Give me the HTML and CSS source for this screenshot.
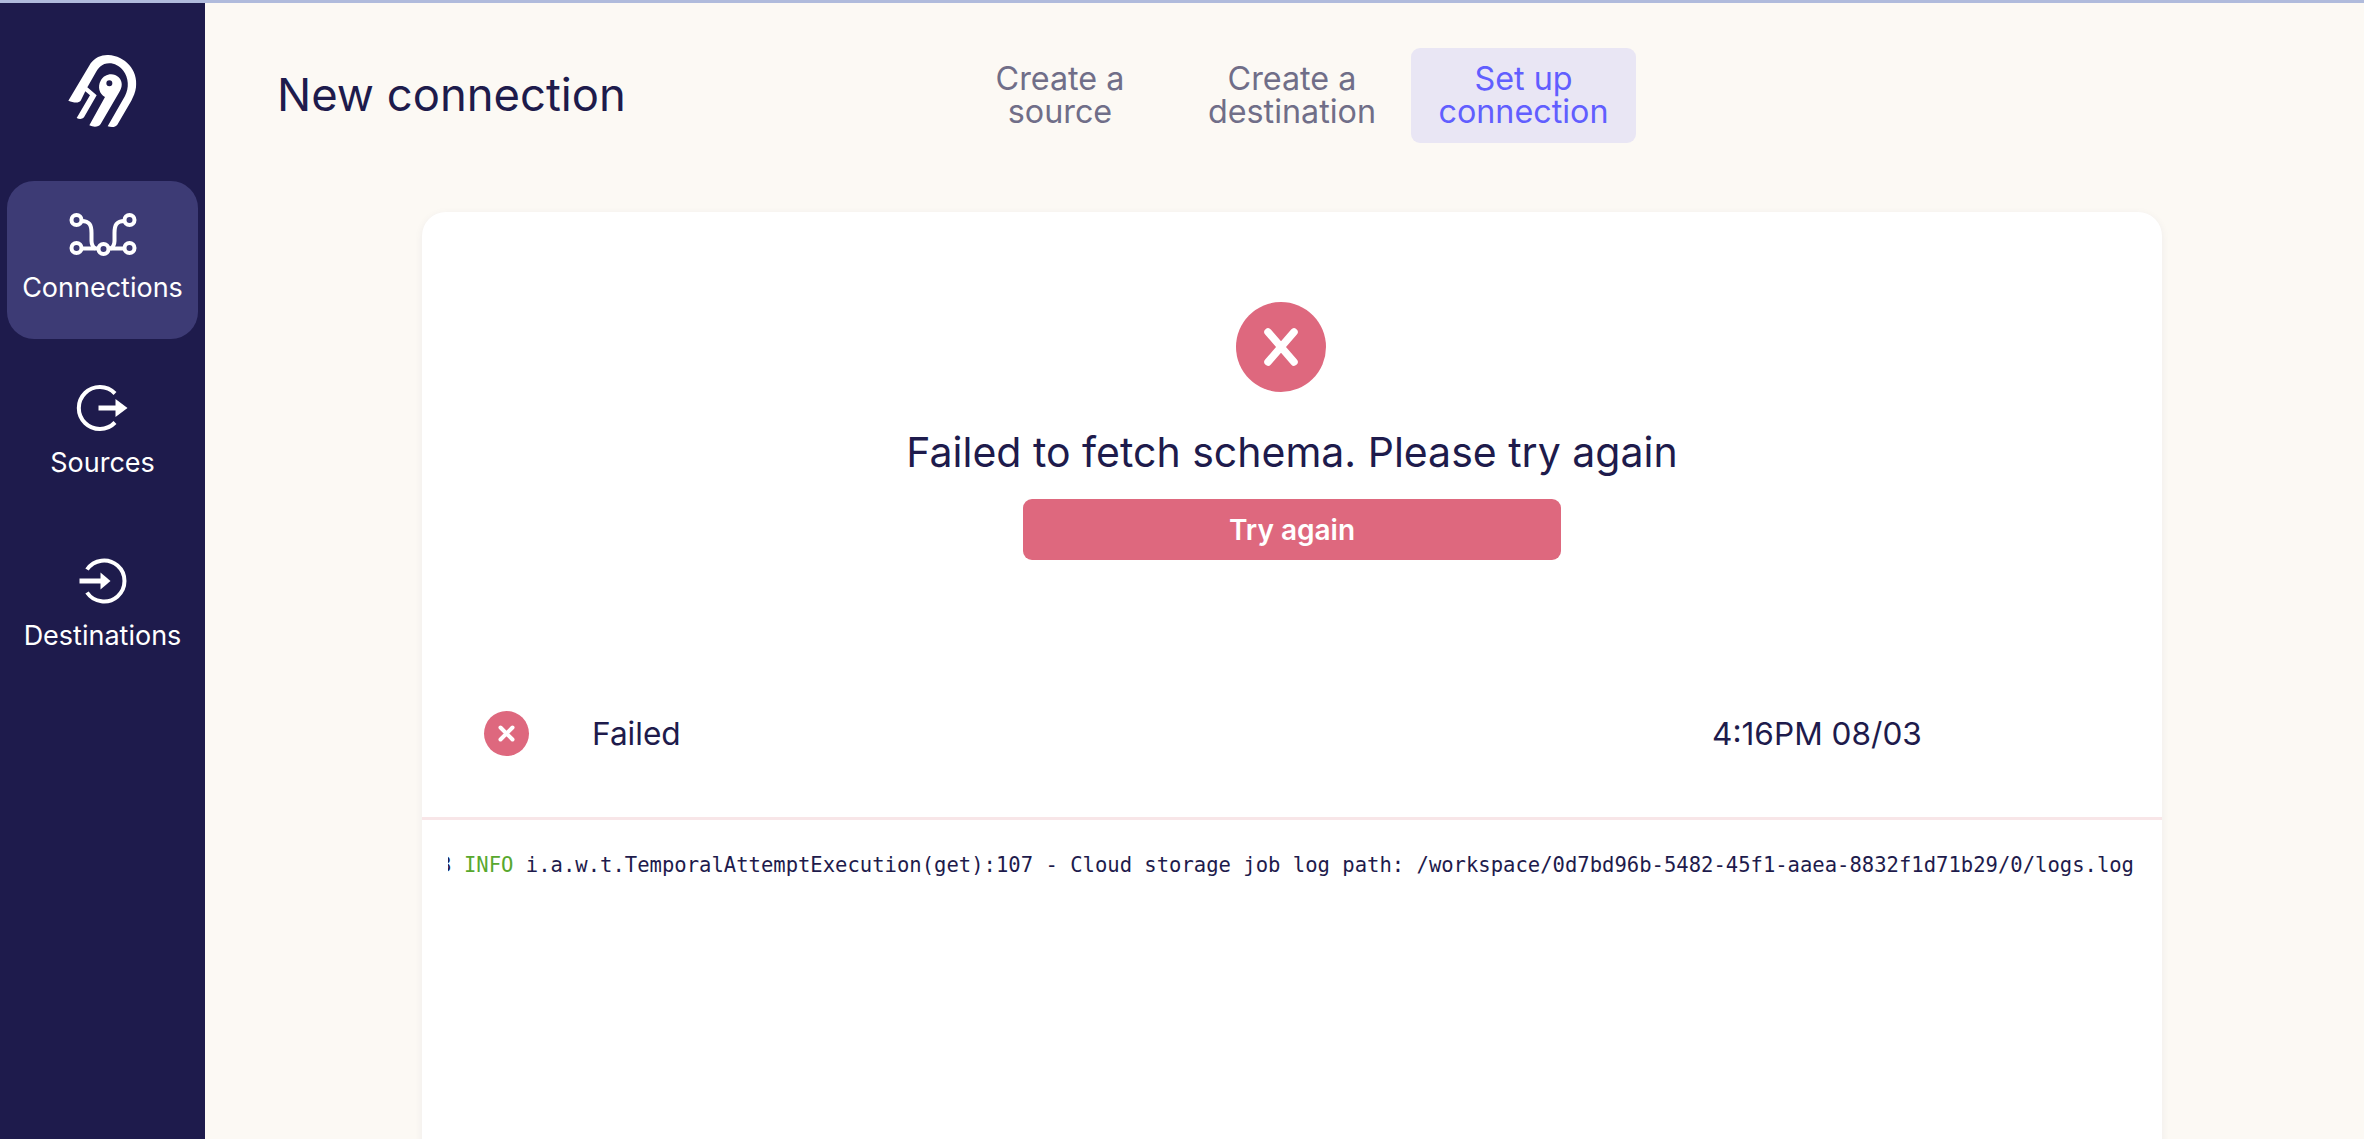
FILE: index.html
```html
<!DOCTYPE html>
<html lang="en">
<head>
<meta charset="utf-8">
<title>New connection</title>
<link rel="stylesheet" href="styles.css">
</head>
<body>
<div class="app">
  <nav class="sidebar">
    <svg class="logo" viewBox="0 0 255 255" aria-hidden="true">
      <path class="logo-fill" d="M25 152 L92 40 C105 22 125 14 145 15 C195 18 235 60 228 112 C226 128 220 140 214 152 L172 224 C166 232 155 232 143 229 L195 138 C208 112 206 84 190 62 C172 38 140 32 120 50 C114 56 110 62 106 70 L82 112 L110 136 L72 202 C66 208 58 208 50 204 L90 136 L76 124 L62 152 C56 160 40 158 25 152 Z"/>
      <path class="logo-fill" fill-rule="evenodd" d="M88 226 L135 141 C118 132 112 110 122 92 C132 72 160 66 176 82 C190 96 186 114 178 126 L122 222 C116 232 100 232 88 226 Z M148 91 A9 9 0 1 0 148.100 109 A9 9 0 1 0 148 91 Z"/>
    </svg>
    <a class="nav-item nav-active">
      <svg class="nav-icon" viewBox="-1.500 0 70 44" aria-hidden="true">
        <g class="ic">
          <circle cx="7" cy="7" r="5"/><circle cx="60" cy="7" r="5"/>
          <circle cx="7" cy="35" r="5"/><circle cx="34" cy="36" r="5"/><circle cx="60" cy="35" r="5"/>
          <path d="M12 35.500 H29 M39 35.500 H55"/>
          <path d="M12 8 C20 8 22 12 22 20 V28 C22 32 24 35 26 35.500"/>
          <path d="M55 8 C47 8 45 12 45 20 V28 C45 32 43 35 41 35.500"/>
        </g>
      </svg>
      <span>Connections</span>
    </a>
    <a class="nav-item">
      <svg class="nav-icon" viewBox="0 0 70 50" aria-hidden="true">
        <g class="ic">
          <path d="M47 10.500 A21 21 0 1 0 47 39.500"/>
          <path class="ic-shaft" d="M30.500 25 H48"/>
        </g>
        <path class="ic-fill" d="M47.500 16 L59.500 25 L47.500 34 Z"/>
      </svg>
      <span>Sources</span>
    </a>
    <a class="nav-item">
      <svg class="nav-icon" viewBox="0 0 70 50" aria-hidden="true">
        <g class="ic">
          <path d="M19 13.500 A20.500 20.500 0 1 1 19 36.500"/>
          <path class="ic-shaft" d="M11.500 25 H34"/>
        </g>
        <path class="ic-fill" d="M32.500 16.500 L42.500 25 L32.500 33.500 Z"/>
      </svg>
      <span>Destinations</span>
    </a>
  </nav>
  <main class="main">
    <header class="header">
      <h1 class="title">New connection</h1>
      <div class="steps">
        <div class="step">Create a source</div>
        <div class="step step-wide">Create a destination</div>
        <div class="step step-active">Set up connection</div>
      </div>
    </header>
    <section class="card">
      <div class="error">
        <div class="error-icon">
          <svg viewBox="0 0 90 90" aria-hidden="true"><path class="cross cross-lg" d="M32 30 L58 60 M58 30 L32 60"/></svg>
        </div>
        <h2 class="error-title">Failed to fetch schema. Please try again</h2>
        <button class="retry">Try again</button>
      </div>
      <div class="attempt">
        <div class="attempt-icon">
          <svg viewBox="0 0 45 45" aria-hidden="true"><path class="cross cross-sm" d="M16.500 16.500 L28.500 28.500 M28.500 16.500 L16.500 28.500"/></svg>
        </div>
        <div class="attempt-status">Failed</div>
        <div class="attempt-time">4:16PM 08/03</div>
      </div>
      <div class="log">
        <pre class="log-line">2022-08-03 16:16:23 <span class="log-info">INFO</span> i.a.w.t.TemporalAttemptExecution(get):107 - Cloud storage job log path: /workspace/0d7bd96b-5482-45f1-aaea-8832f1d71b29/0/logs.log</pre>
      </div>
    </section>
  </main>
</div>
</body>
</html>
```
FILE: styles.css
```css
* { box-sizing: border-box; }
html, body { height: 100%; }
body {
  margin: 0;
  overflow: hidden;
  font-family: Inter, "Liberation Sans", sans-serif;
  color: #1e1b4c;
  background: #fcf9f4;
  border-top: 3px solid #b0bbdc;
}
.app { display: flex; height: 100%; }
.sidebar {
  flex: 0 0 205px;
  display: flex;
  flex-direction: column;
  align-items: center;
  background: #1e1b4c;
  color: #fff;
}
.logo { width: 85px; height: 85px; margin-top: 47px; margin-bottom: 46px; }
.logo-fill { fill: #fff; }
.nav-item {
  width: 191px;
  height: 158px;
  flex: none;
  border-radius: 27px;
  display: flex;
  flex-direction: column;
  align-items: center;
  padding-top: 29px;
  font-size: 27px;
  line-height: 32px;
  margin-bottom: 15px;
}
.nav-active { background: #3d3b75; }
.nav-icon { width: 70px; height: 50px; display: block; margin-bottom: 14px; }
.nav-active .nav-icon { margin-bottom: 12px; }
.ic { fill: none; stroke: #fff; stroke-width: 4; }
.ic-shaft { stroke-width: 5; }
.ic-fill { fill: #fff; }
.main { flex: 1; min-width: 0; overflow: hidden; }
.header {
  display: flex;
  align-items: flex-start;
  padding: 45px 0 0 72px;
  height: 209px;
}
.title {
  margin: 0;
  width: 667px;
  font-size: 45.400px;
  line-height: 93px;
  font-weight: 400;
}
.steps { display: flex; }
.step {
  width: 232px;
  height: 95px;
  padding: 14px 27px 0;
  border-radius: 9px;
  text-align: center;
  font-size: 32.300px;
  line-height: 33px;
  color: #706e88;
}
.step-active { color: #615eff; background: #e9e6f4; width: 225px; margin-left: 3px; padding: 14px 20px 0; }
.card {
  width: 1740px;
  height: 1000px;
  margin-left: 217px;
  background: #fff;
  border-radius: 24px;
  box-shadow: 0 2px 8px rgba(26, 25, 77, 0.06);
}
.error {
  display: flex;
  flex-direction: column;
  align-items: center;
  padding-top: 90px;
}
.error-icon {
  width: 90px;
  height: 90px;
  margin-right: 23px;
  border-radius: 50%;
  background: #de687e;
}
.error-icon svg, .attempt-icon svg { display: block; width: 100%; height: 100%; }
.cross { fill: none; stroke: #fff; stroke-linecap: round; }
.cross-lg { stroke-width: 7.500; }
.cross-sm { stroke-width: 4; }
.error-title {
  margin: 36px 0 0;
  font-size: 41px;
  line-height: 48px;
  font-weight: 400;
}
.retry {
  width: 538px;
  height: 61px;
  margin-top: 23px;
  border: 0;
  border-radius: 9px;
  background: #de687e;
  color: #fff;
  font-family: inherit;
  font-size: 28px;
  font-weight: 600;
}
.attempt {
  display: flex;
  align-items: flex-end;
  height: 260px;
  padding: 0 0 61px 62px;
  border-bottom: 3px solid #f8e6e8;
  font-size: 31.600px;
  line-height: 45px;
}
.attempt-icon {
  width: 45px;
  height: 45px;
  border-radius: 50%;
  background: #de687e;
}
.attempt-status { margin-left: 63px; width: 1120px; }
.log {
  display: flex;
  justify-content: flex-end;
  overflow: hidden;
  margin: 30px 28px 0 26px;
}
.log-line {
  flex: none;
  margin: 0;
  font-family: "DejaVu Sans Mono", monospace;
  font-size: 20.550px;
  line-height: 30px;
}
.log-info { color: #58a82e; }
```
